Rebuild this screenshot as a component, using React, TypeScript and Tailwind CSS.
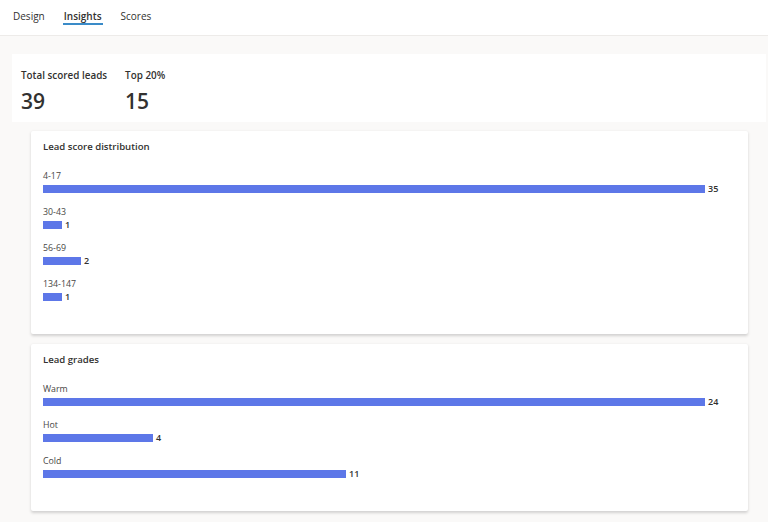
import React from "react";

const font = { fontFamily: '"Open Sans", "Noto Sans", sans-serif' };

type Row = { label: string; value: number };

const dist: Row[] = [
  { label: "4-17", value: 35 },
  { label: "30-43", value: 1 },
  { label: "56-69", value: 2 },
  { label: "134-147", value: 1 },
];

const grades: Row[] = [
  { label: "Warm", value: 24 },
  { label: "Hot", value: 4 },
  { label: "Cold", value: 11 },
];

function Chart({ title, rows }: { title: string; rows: Row[] }) {
  const max = Math.max(...rows.map((r) => r.value));
  return (
    <div className="bg-white rounded-[2px] shadow-[0_1.5px_3px_rgba(0,0,0,0.16)] pl-[12px] pr-[12px] pt-[8px] pb-[33px]">
      <div className="text-[9.6px] leading-[16px] font-semibold text-[#323130]">{title}</div>
      <div className="mt-[14px] flex flex-col gap-[12px]">
        {rows.map((r) => (
          <div key={r.label} className="flex flex-col">
            <div className="text-[8.8px] leading-[14px] text-[#484644]">{r.label}</div>
            <div className="mt-[2px] flex items-center h-[8px]">
              <div
                className="h-[8px] bg-[#5d77e8]"
                style={{ width: `${Math.round((r.value / max) * 662)}px` }}
              />
              <span className="ml-[3px] text-[9px] leading-[8px] font-semibold text-[#323130]">
                {r.value}
              </span>
            </div>
          </div>
        ))}
      </div>
    </div>
  );
}

export default function App() {
  return (
    <div className="w-[768px] h-[522px] bg-[#faf9f8] overflow-hidden" style={font}>
      <div className="h-[36px] bg-white border-b border-[#edebe9] flex items-start pl-[13px] gap-[19px] text-[10px] text-[#323130]">
        <div className="pt-[7px] leading-[18px]">Design</div>
        <div className="pt-[7px] leading-[18px] relative font-semibold">
          Insights
          <div className="absolute left-[-1px] right-[-1px] top-[23px] h-[2px] bg-[#3a8bc8]" />
        </div>
        <div className="pt-[7px] leading-[18px]">Scores</div>
      </div>
      <div className="pt-[18px] pl-[12px] pr-[2px]">
        <div className="bg-white h-[68px] flex gap-[18px] pl-[9px] pt-[14px]">
          <div className="flex flex-col">
            <div className="text-[9.9px] leading-[14px] font-semibold text-[#323130]">Total scored leads</div>
            <div className="text-[21px] leading-[28px] font-semibold text-[#323130] mt-[5px]">39</div>
          </div>
          <div className="flex flex-col">
            <div className="text-[9.9px] leading-[14px] font-semibold text-[#323130]">Top 20%</div>
            <div className="text-[21px] leading-[28px] font-semibold text-[#323130] mt-[5px]">15</div>
          </div>
        </div>
        <div className="pl-[19px] pr-[18px] pt-[9px] flex flex-col gap-[10px]">
          <Chart title="Lead score distribution" rows={dist} />
          <Chart title="Lead grades" rows={grades} />
        </div>
      </div>
    </div>
  );
}
